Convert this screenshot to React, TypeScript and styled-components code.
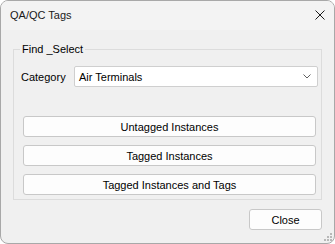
import React from "react";
import styled, { createGlobalStyle } from "styled-components";

const Global = createGlobalStyle`
  html, body { margin: 0; padding: 0; background: #ffffff; }
  body { font-family: "Liberation Sans", Arial, sans-serif; font-size: 11px; color: #000; }
  * { box-sizing: border-box; }
`;

const Window = styled.div`
  position: relative;
  width: 335px;
  height: 244px;
  border: 1px solid #a8a8a8;
  border-radius: 8px;
  background: #f0f0f0;
  display: flex;
  flex-direction: column;
  overflow: hidden;
`;

const TitleBar = styled.div`
  height: 29px;
  background: #f3f3f3;
  display: flex;
  align-items: center;
  justify-content: space-between;
  padding: 0 9px 2px 9px;
  font-size: 11px;
  color: #1a1a1a;
`;

const CloseX = styled.svg`
  width: 10px;
  height: 10px;
  margin-right: 0px;
  margin-top: 1px;
`;

const Content = styled.div`
  flex: 1;
  display: flex;
  flex-direction: column;
  padding: 19px 12px 0 12px;
`;

const GroupBox = styled.div`
  position: relative;
  border: 1px solid #dcdcdc;
  padding: 16px 3px 4px 7px;
  display: flex;
  flex-direction: column;
`;

const Legend = styled.span`
  position: absolute;
  top: -7px;
  left: 6px;
  padding: 0 2px;
  background: #f0f0f0;
  line-height: 13px;
`;

const Row = styled.div`
  display: flex;
  align-items: center;
  height: 21px;
`;

const Label = styled.span`
  width: 53px;
`;

const Combo = styled.div`
  flex: 1;
  height: 21px;
  background: #ffffff;
  border: 1px solid #cfcfcf;
  border-radius: 2px;
  display: flex;
  align-items: center;
  justify-content: space-between;
  padding: 0 6px 0 4px;
`;

const Chevron = styled.svg`
  width: 8px;
  height: 5px;
`;

const Buttons = styled.div`
  display: flex;
  flex-direction: column;
  gap: 8px;
  margin: 29px 2px 0 2px;
`;

const Button = styled.button<{ $w?: number }>`
  height: 21px;
  width: ${(p) => (p.$w ? `${p.$w}px` : "100%")};
  background: #fdfdfd;
  border: 1px solid #c8c8c8;
  border-radius: 3px;
  font-family: "Liberation Sans", Arial, sans-serif;
  font-size: 11px;
  color: #000;
  padding: 0;
  display: flex;
  align-items: center;
  justify-content: center;
`;

const Footer = styled.div`
  display: flex;
  justify-content: flex-end;
  margin-top: 9px;
`;

const Grip = styled.svg`
  position: absolute;
  right: 2px;
  bottom: 2px;
  width: 8px;
  height: 8px;
`;

export default function App() {
  return (
    <>
      <Global />
      <Window>
        <TitleBar>
          <span>QA/QC Tags</span>
          <CloseX viewBox="0 0 10 10">
            <path d="M0.5 0.5 L9.5 9.5 M9.5 0.5 L0.5 9.5" stroke="#1a1a1a" strokeWidth="1" fill="none" />
          </CloseX>
        </TitleBar>
        <Content>
          <GroupBox>
            <Legend>Find _Select</Legend>
            <Row>
              <Label>Category</Label>
              <Combo>
                <span>Air Terminals</span>
                <Chevron viewBox="0 0 8 5">
                  <path d="M0.5 0.5 L4 4 L7.5 0.5" stroke="#606060" strokeWidth="1" fill="none" />
                </Chevron>
              </Combo>
            </Row>
            <Buttons>
              <Button>Untagged Instances</Button>
              <Button>Tagged Instances</Button>
              <Button>Tagged Instances and Tags</Button>
            </Buttons>
          </GroupBox>
          <Footer>
            <Button $w={73}>Close</Button>
          </Footer>
        </Content>
        <Grip viewBox="0 0 8 8">
          {[
            [6, 0], [6, 3], [3, 3], [6, 6], [3, 6], [0, 6],
          ].map(([x, y], i) => (
            <rect key={i} x={x} y={y} width="2" height="2" fill="#b8b8b8" />
          ))}
        </Grip>
      </Window>
    </>
  );
}
